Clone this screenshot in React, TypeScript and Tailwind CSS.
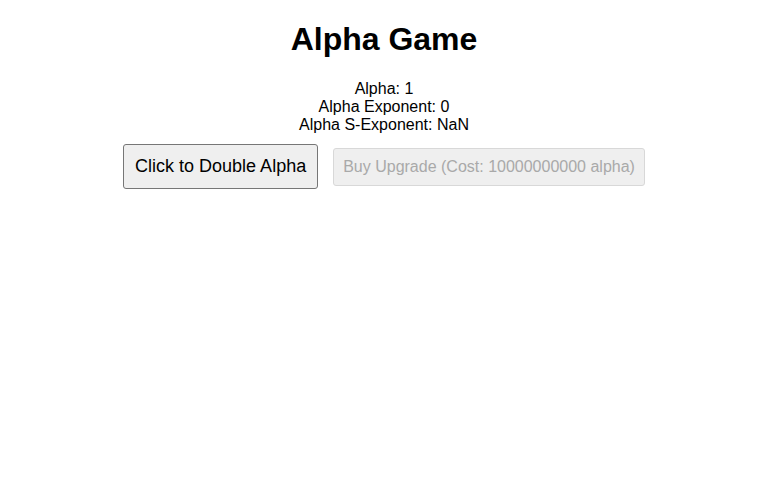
export default function App() {
  const alpha = 1;
  const exponent = 0;
  return (
    <div className="min-h-[480px] bg-white text-center text-black" style={{ fontFamily: '"Liberation Sans", Arial, sans-serif' }}>
      <h1 className="pt-[21px] mb-[22px] text-[32px] leading-[37px] font-bold">Alpha Game</h1>
      <div className="text-[16px] leading-[18px]">
        <div>Alpha: {alpha}</div>
        <div>Alpha Exponent: {exponent}</div>
        <div>Alpha S-Exponent: NaN</div>
      </div>
      <div className="mt-[10px] flex items-baseline justify-center gap-[15px]">
        <button className="rounded-[3px] border border-[#767676] bg-[#efefef] px-[11px] py-[11px] text-[18px] leading-[21px] text-black">
          Click to Double Alpha
        </button>
        <button
          disabled
          className="rounded-[3px] border border-[#d8d8d8] bg-[#efefef] px-[9px] py-[9px] text-[16px] leading-[18px] text-[#a9a9a9]"
        >
          Buy Upgrade (Cost: 10000000000 alpha)
        </button>
      </div>
    </div>
  );
}
